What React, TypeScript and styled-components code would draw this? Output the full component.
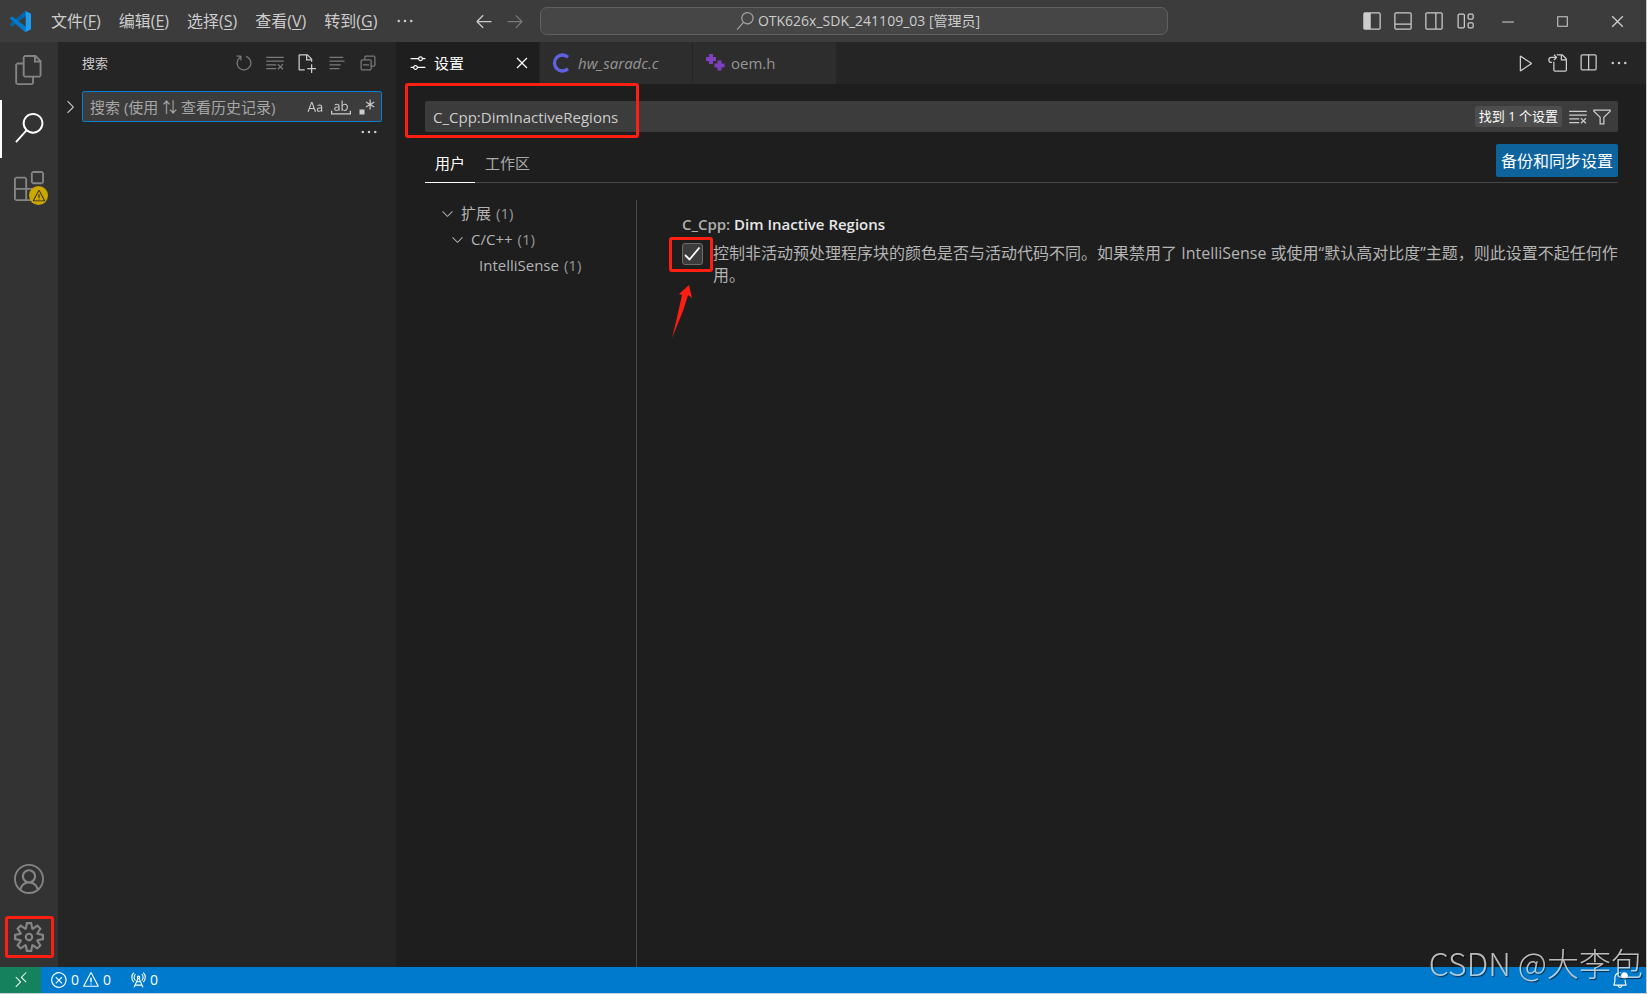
import React from 'react';
import styled, { createGlobalStyle, css } from 'styled-components';
import {
  VscFiles, VscSearch, VscExtensions, VscAccount, VscSettingsGear, VscRefresh, VscClearAll, VscNewFile,
  VscListFlat, VscCollapseAll, VscCaseSensitive, VscWholeWord, VscRegex, VscEllipsis, VscArrowLeft,
  VscArrowRight, VscLayoutSidebarLeft, VscLayoutPanelOff, VscLayoutSidebarRightOff, VscLayout,
  VscChromeMinimize, VscChromeMaximize, VscChromeClose, VscPlay, VscGoToFile, VscSplitHorizontal,
  VscFilter, VscRemote, VscError, VscWarning, VscRadioTower, VscBellDot, VscSettings, VscClose,
  VscChevronRight, VscChevronDown,
} from 'react-icons/vsc';

const Global = createGlobalStyle`
  *, *::before, *::after { box-sizing: border-box; }
  body {
    margin: 0;
    background: #1e1e1e;
    color: #cccccc;
    font: 15px/20px 'Open Sans', 'Noto Sans CJK SC', sans-serif;
  }
  button, input { font: inherit; color: inherit; }
`;

const RED = '#fe1f12';

const Window = styled.div`
  display: flex;
  flex-direction: column;
  height: 100vh;
  overflow: hidden;
  border-right: 1px solid #c8c8c8;
`;

const IconButton = styled.button<{ $size?: number; $dim?: boolean; $bright?: boolean }>`
  display: inline-flex;
  align-items: center;
  justify-content: center;
  flex: none;
  padding: 0;
  border: 0;
  background: none;
  color: ${p => (p.$bright ? '#ffffff' : p.$dim ? '#7a7a7a' : '#cccccc')};
  svg { width: ${p => p.$size ?? 20}px; height: ${p => p.$size ?? 20}px; }
`;

const IconRow = styled.div<{ $gap: number }>`
  display: flex;
  align-items: center;
  gap: ${p => p.$gap}px;
`;

/* Title bar */
const TitleBar = styled.header`
  display: grid;
  grid-template-columns: 540px minmax(200px, 628px) 1fr;
  align-items: center;
  flex: none;
  height: 42px;
  background: #3c3c3c;
`;
const TitleLeft = styled.div`
  display: flex;
  align-items: center;
  padding: 0 15px 0 10px;
  min-width: 0;
`;
const Menu = styled.nav`
  display: flex;
  gap: 18px;
  margin-left: 20px;
  flex: 1;
`;
const MenuItem = styled.button`
  padding: 0;
  border: 0;
  background: none;
  font-size: 16px;
  white-space: nowrap;
  u { text-underline-offset: 2px; }
`;
const CommandCenter = styled.button`
  display: flex;
  align-items: center;
  justify-content: center;
  gap: 4px;
  height: 28px;
  padding: 0 0 0 8px;
  border: 1px solid #606060;
  border-radius: 7px;
  background: #464646;
  font-size: 14px;
  svg { width: 18px; height: 18px; color: #a6a6a6; }
`;
const TitleRight = styled.div`
  display: flex;
  justify-content: flex-end;
  align-items: center;
`;
const WindowButtons = styled.div`
  display: flex;
  margin: 0 1px 0 5px;
  button { width: 55px; height: 42px; }
`;

/* Workbench */
const Workbench = styled.div`
  display: flex;
  flex: 1;
  min-height: 0;
`;
const ActivityBar = styled.nav`
  display: flex;
  flex-direction: column;
  justify-content: space-between;
  flex: none;
  width: 58px;
  background: #333333;
`;
const ActivityGroup = styled.div`
  display: flex;
  flex-direction: column;
`;
const Activity = styled.button<{ $active?: boolean }>`
  position: relative;
  display: flex;
  align-items: center;
  justify-content: center;
  width: 58px;
  height: 58px;
  padding: 0 0 2px;
  border: 0;
  border-left: 2px solid ${p => (p.$active ? '#ffffff' : 'transparent')};
  border-right: 2px solid transparent;
  background: none;
  color: ${p => (p.$active ? '#ffffff' : '#858585')};
  > svg { width: 30px; height: 30px; }
`;
const WarningBadge = styled.span`
  position: absolute;
  right: 8px;
  bottom: 11px;
  display: grid;
  place-items: center;
  width: 19px;
  height: 19px;
  border-radius: 50%;
  background: #cca700;
  color: #252526;
  svg { width: 14px; height: 14px; }
`;

const frame = css`
  content: '';
  position: absolute;
  border: 3px solid ${RED};
  border-radius: 3px;
  pointer-events: none;
`;
const GearButton = styled(Activity)`
  &::after { ${frame} inset: 7px 2px 9px 3px; }
`;

const SideBar = styled.aside`
  display: flex;
  flex-direction: column;
  flex: none;
  width: 338px;
  background: #252526;
`;
const SideTitle = styled.div`
  display: flex;
  align-items: center;
  justify-content: space-between;
  height: 42px;
  padding: 0 18px 0 24px;
`;
const SideHeading = styled.h2`
  margin: 0;
  font-size: 13px;
  font-weight: 400;
`;
const SearchRow = styled.div`
  display: flex;
  align-items: center;
  gap: 2px;
  margin-top: 7px;
  padding: 0 14px 0 2px;
`;
const SearchBox = styled.label`
  display: flex;
  align-items: center;
  flex: 1;
  height: 31px;
  padding: 0 4px 0 7px;
  border: 1px solid #007fd4;
  border-radius: 2px;
  background: #3c3c3c;
`;
const TextInput = styled.input`
  flex: 1;
  min-width: 0;
  padding: 0;
  border: 0;
  outline: 0;
  background: none;
  &::placeholder { color: #a6a6a6; opacity: 1; }
`;
const SearchMore = styled.div`
  display: flex;
  justify-content: flex-end;
  padding-right: 17px;
`;

/* Editor */
const Editor = styled.main`
  display: flex;
  flex-direction: column;
  flex: 1;
  min-width: 0;
`;
const TabBar = styled.div`
  display: flex;
  align-items: center;
  justify-content: space-between;
  flex: none;
  height: 42px;
  padding-right: 17px;
  background: #252526;
`;
const Tabs = styled.div`
  display: flex;
`;
const Tab = styled.div<{ $active?: boolean; $preview?: boolean; $width: number }>`
  display: flex;
  align-items: center;
  gap: 6px;
  width: ${p => p.$width}px;
  height: 42px;
  padding: 0 7px 0 12px;
  border-right: 1px solid #252526;
  background: ${p => (p.$active ? '#1e1e1e' : '#2d2d2d')};
  color: ${p => (p.$active ? '#ffffff' : '#969696')};
  font-style: ${p => (p.$preview ? 'italic' : 'normal')};
  > svg { flex: none; }
  button { margin-left: auto; }
`;
const SettingsPage = styled.section`
  display: flex;
  flex-direction: column;
  flex: 1;
  padding: 17px 28px 0 29px;
  min-height: 0;
`;
const SettingsSearch = styled.label`
  position: relative;
  display: flex;
  align-items: center;
  flex: none;
  height: 31px;
  padding: 0 6px 0 8px;
  border-radius: 2px;
  background: #3c3c3c;
  &::after { ${frame} left: -20px; top: -18px; width: 234px; height: 55px; }
`;
const ResultCount = styled.span`
  margin-right: 6px;
  padding: 0 4px;
  border-radius: 2px;
  background: #4d4d4d;
  color: #ffffff;
  font-size: 13px;
  line-height: 21px;
`;
const ScopeBar = styled.div`
  display: flex;
  align-items: flex-end;
  justify-content: space-between;
  flex: none;
  height: 51px;
  border-bottom: 1px solid #474747;
`;
const Scope = styled.button<{ $active?: boolean }>`
  height: 39px;
  margin-bottom: -1px;
  padding: 0 10px;
  border: 0;
  border-bottom: 1px solid ${p => (p.$active ? '#ffffff' : 'transparent')};
  background: none;
  color: ${p => (p.$active ? '#ffffff' : '#aaaaaa')};
`;
const SyncButton = styled.button`
  height: 33px;
  margin-bottom: 5px;
  padding: 0 5px;
  border: 0;
  border-radius: 2px;
  background: #0e639c;
  color: #ffffff;
  font-size: 16px;
`;
const SettingsBody = styled.div`
  display: flex;
  flex: 1;
  min-height: 0;
  padding-top: 17px;
`;
const Toc = styled.ul`
  flex: none;
  width: 212px;
  margin: 0;
  padding: 0 0 0 14px;
  border-right: 1px solid #474747;
  list-style: none;
`;
const TocItem = styled.li<{ $level: number }>`
  display: flex;
  align-items: center;
  gap: 5px;
  height: 26px;
  padding-left: ${p => p.$level * 10}px;
  color: #b4b4b4;
  span { color: #969696; }
  svg { width: 17px; height: 17px; }
`;
const Setting = styled.article`
  flex: 1;
  padding: 13px 0 0 45px;
`;
const SettingTitle = styled.h3`
  margin: 0;
  color: #e7e7e7;
  font-size: 15px;
  font-weight: 600;
  line-height: 22px;
  span { color: #b0b0b0; }
`;
const SettingRow = styled.div`
  display: flex;
  align-items: flex-start;
  gap: 10px;
  margin-top: 7px;
`;
const CheckHolder = styled.div`
  position: relative;
  flex: none;
  width: 21px;
  height: 22px;
  margin-top: 1px;
  &::after { ${frame} left: -13px; top: -6px; width: 44px; height: 35px; }
`;
const Checkbox = styled.input`
  appearance: none;
  display: block;
  width: 21px;
  height: 22px;
  margin: 0;
  border: 1px solid #6b6b6b;
  border-radius: 3px;
  background: #3c3c3c;
`;
const CheckMark = styled.svg`
  position: absolute;
  left: 2px;
  top: 3px;
  pointer-events: none;
`;
const Arrow = styled.svg`
  position: absolute;
  left: -10px;
  top: 41px;
`;
const Description = styled.label`
  color: #b4b4b4;
  font-size: 16px;
  line-height: 22px;
`;

/* Status bar */
const StatusBar = styled.footer`
  display: flex;
  align-items: center;
  flex: none;
  height: 27px;
  background: #007acc;
  color: #ffffff;
  font-size: 14px;
  border-bottom: 1px solid #c4d3dc;
`;
const RemoteButton = styled(IconButton)`
  width: 41px;
  height: 26px;
  background: #16825d;
  color: #ffffff;
`;
const StatusItems = styled.div`
  display: flex;
  gap: 18px;
  margin-left: 9px;
`;
const StatusItem = styled.button`
  display: flex;
  align-items: center;
  gap: 3px;
  padding: 0;
  border: 0;
  background: none;
  svg { width: 18px; height: 18px; }
`;
const Bell = styled(IconButton)`
  margin-left: auto;
  margin-right: 17px;
  color: #ffffff;
`;
const Watermark = styled.div`
  position: fixed;
  right: 4px;
  bottom: 13px;
  color: rgba(255, 255, 255, 0.7);
  font: 32px/38px 'Noto Sans CJK SC', sans-serif;
  font-weight: 300;
  text-shadow: 1px 1px 1px rgba(0, 0, 0, 0.6);
  pointer-events: none;
`;

const CodeLogo = () => (
  <svg width="21" height="21" viewBox="0 0 100 100" aria-hidden="true">
    <path fill="#0065a9" d="M96 11 75 1a6 6 0 0 0-7 1L1 62a4 4 0 0 0 0 6l6 5a4 4 0 0 0 5 0L94 12z" />
    <path fill="#007acc" d="M96 89 75 99a6 6 0 0 1-7-1L1 38a4 4 0 0 1 0-6l6-5a4 4 0 0 1 5 0l82 61z" />
    <path fill="#1f9cf0" d="M75 99a6 6 0 0 1-7-1c2 2 7 1 7-3V5c0-4-5-5-7-3a6 6 0 0 1 7-1l21 10a6 6 0 0 1 4 6v66a6 6 0 0 1-4 6z" />
  </svg>
);
const CFileIcon = () => (
  <svg width="20" height="20" viewBox="0 0 20 20" aria-hidden="true">
    <path d="M16 4.2A8 8 0 1 0 16 15.8" fill="none" stroke="#5f61e0" strokeWidth="3.4" />
  </svg>
);
const HeaderFileIcon = () => (
  <svg width="20" height="20" viewBox="0 0 20 20" fill="none" stroke="#7f3fbf" strokeWidth="4" aria-hidden="true">
    <path d="M6 1V11M1 6H11M14.5 7.500V17.500M9.500 12.500H19.500" />
  </svg>
);

const menus = [['文件', 'F'], ['编辑', 'E'], ['选择', 'S'], ['查看', 'V'], ['转到', 'G']];

export default function App() {
  return (
    <Window>
      <Global />
      <TitleBar>
        <TitleLeft>
          <CodeLogo />
          <Menu>
            {menus.map(([name, key]) => (
              <MenuItem key={key}>{name}(<u>{key}</u>)</MenuItem>
            ))}
            <IconButton aria-label="更多菜单"><VscEllipsis /></IconButton>
          </Menu>
          <IconRow $gap={11}>
            <IconButton aria-label="后退"><VscArrowLeft /></IconButton>
            <IconButton aria-label="前进" $dim><VscArrowRight /></IconButton>
          </IconRow>
        </TitleLeft>
        <CommandCenter><VscSearch />OTK626x_SDK_241109_03 [管理员]</CommandCenter>
        <TitleRight>
          <IconRow $gap={11}>
            <IconButton aria-label="主侧栏"><VscLayoutSidebarLeft /></IconButton>
            <IconButton aria-label="面板"><VscLayoutPanelOff /></IconButton>
            <IconButton aria-label="辅助侧栏"><VscLayoutSidebarRightOff /></IconButton>
            <IconButton aria-label="布局"><VscLayout /></IconButton>
          </IconRow>
          <WindowButtons>
            <IconButton aria-label="最小化" $size={17}><VscChromeMinimize /></IconButton>
            <IconButton aria-label="最大化" $size={17}><VscChromeMaximize /></IconButton>
            <IconButton aria-label="关闭" $size={17}><VscChromeClose /></IconButton>
          </WindowButtons>
        </TitleRight>
      </TitleBar>

      <Workbench>
        <ActivityBar>
          <ActivityGroup>
            <Activity aria-label="资源管理器"><VscFiles /></Activity>
            <Activity aria-label="搜索" $active><VscSearch /></Activity>
            <Activity aria-label="扩展">
              <VscExtensions />
              <WarningBadge><VscWarning /></WarningBadge>
            </Activity>
          </ActivityGroup>
          <ActivityGroup>
            <Activity aria-label="帐户"><VscAccount /></Activity>
            <GearButton aria-label="管理"><VscSettingsGear /></GearButton>
          </ActivityGroup>
        </ActivityBar>

        <SideBar>
          <SideTitle>
            <SideHeading>搜索</SideHeading>
            <IconRow $gap={11}>
              <IconButton aria-label="刷新" $dim><VscRefresh /></IconButton>
              <IconButton aria-label="清除" $dim><VscClearAll /></IconButton>
              <IconButton aria-label="新建"><VscNewFile /></IconButton>
              <IconButton aria-label="列表" $dim><VscListFlat /></IconButton>
              <IconButton aria-label="折叠" $dim><VscCollapseAll /></IconButton>
            </IconRow>
          </SideTitle>
          <SearchRow>
            <IconButton aria-label="切换替换"><VscChevronRight /></IconButton>
            <SearchBox>
              <TextInput aria-label="搜索" placeholder="搜索 (使用 ⇅ 查看历史记录)" />
              <IconRow $gap={6}>
                <IconButton aria-label="区分大小写"><VscCaseSensitive /></IconButton>
                <IconButton aria-label="全字匹配"><VscWholeWord /></IconButton>
                <IconButton aria-label="正则表达式"><VscRegex /></IconButton>
              </IconRow>
            </SearchBox>
          </SearchRow>
          <SearchMore><IconButton aria-label="更多"><VscEllipsis /></IconButton></SearchMore>
        </SideBar>

        <Editor>
          <TabBar>
            <Tabs>
              <Tab $active $width={144}>
                <VscSettings size={20} />设置
                <IconButton aria-label="关闭标签" $bright><VscClose /></IconButton>
              </Tab>
              <Tab $preview $width={153}><CFileIcon />hw_saradc.c</Tab>
              <Tab $width={144}><HeaderFileIcon />oem.h</Tab>
            </Tabs>
            <IconRow $gap={11}>
              <IconButton aria-label="运行"><VscPlay /></IconButton>
              <IconButton aria-label="打开设置文件"><VscGoToFile /></IconButton>
              <IconButton aria-label="拆分"><VscSplitHorizontal /></IconButton>
              <IconButton aria-label="更多操作"><VscEllipsis /></IconButton>
            </IconRow>
          </TabBar>
          <SettingsPage>
            <SettingsSearch>
              <TextInput aria-label="搜索设置" defaultValue="C_Cpp:DimInactiveRegions" />
              <ResultCount>找到 1 个设置</ResultCount>
              <IconRow $gap={4}>
                <IconButton aria-label="清除搜索"><VscClearAll /></IconButton>
                <IconButton aria-label="筛选"><VscFilter /></IconButton>
              </IconRow>
            </SettingsSearch>
            <ScopeBar>
              <div>
                <Scope $active>用户</Scope>
                <Scope>工作区</Scope>
              </div>
              <SyncButton>备份和同步设置</SyncButton>
            </ScopeBar>
            <SettingsBody>
              <Toc>
                <TocItem $level={0}><VscChevronDown />扩展 <span>(1)</span></TocItem>
                <TocItem $level={1}><VscChevronDown />C/C++ <span>(1)</span></TocItem>
                <TocItem $level={4}>IntelliSense <span>(1)</span></TocItem>
              </Toc>
              <Setting>
                <SettingTitle><span>C_Cpp:</span> Dim Inactive Regions</SettingTitle>
                <SettingRow>
                  <CheckHolder>
                    <Checkbox type="checkbox" id="dim" defaultChecked />
                    <CheckMark width="17" height="16" viewBox="0 0 17 16" fill="none" stroke="#ffffff" strokeWidth="1.8">
                      <path d="M1 9 5.500 13.500 15.500 1.500" />
                    </CheckMark>
                    <Arrow width="22" height="56" viewBox="0 0 22 56" fill={RED}>
                      <path d="M0 54 4 38 10 11 7 10 17 1 20 14 16 11 11 27Z" />
                    </Arrow>
                  </CheckHolder>
                  <Description htmlFor="dim">
                    控制非活动预处理程序块的颜色是否与活动代码不同。如果禁用了 IntelliSense 或使用“默认高对比度”主题，则此设置不起任何作用。
                  </Description>
                </SettingRow>
              </Setting>
            </SettingsBody>
          </SettingsPage>
        </Editor>
      </Workbench>

      <StatusBar>
        <RemoteButton aria-label="远程" $size={18}><VscRemote /></RemoteButton>
        <StatusItems>
          <StatusItem><VscError />0 <VscWarning />0</StatusItem>
          <StatusItem><VscRadioTower />0</StatusItem>
        </StatusItems>
        <Bell aria-label="通知" $size={18}><VscBellDot /></Bell>
      </StatusBar>
      <Watermark>CSDN @大李包</Watermark>
    </Window>
  );
}
